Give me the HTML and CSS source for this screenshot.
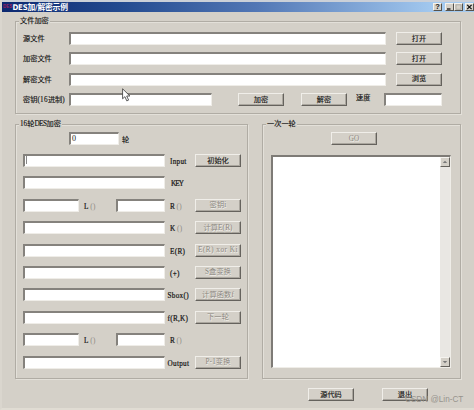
FILE: index.html
```html
<!DOCTYPE html>
<html lang="zh-CN">
<head>
<meta charset="utf-8">
<title>DES加/解密示例</title>
<link rel="stylesheet" href="styles.css">
</head>
<body>
<div class="window">
  <header class="titlebar">
    <span class="app-icon">DES</span>
    <h1>DES加/解密示例</h1>
    <div class="controls">
      <span class="ctl help">?</span>
      <span class="ctl"><svg viewBox="0 0 7 6"><path d="M1 5h3.5" stroke="#111" stroke-width="1.3"/></svg></span>
      <span class="ctl"><svg viewBox="0 0 7 6"><path d="M1 .8h5v4.5H1z" fill="none" stroke="#aaa79f" stroke-width=".8"/></svg></span>
      <span class="ctl close"><svg viewBox="0 0 7 6"><path d="M1.2.8l4.4 4.4M5.6.8L1.2 5.2" stroke="#111" stroke-width="1.2"/></svg></span>
    </div>
  </header>

  <section class="group files">
    <h2>文件加密</h2>
    <div class="file-row"><label>源文件</label><span class="field"></span><button>打开</button></div>
    <div class="file-row"><label>加密文件</label><span class="field"></span><button>打开</button></div>
    <div class="file-row"><label>解密文件</label><span class="field"></span><button>浏览</button></div>
    <div class="file-row key-row"><label>密钥<span class="lat">(16</span>进制<span class="lat">)</span></label><span class="field"></span><button>加密</button><button>解密</button><label>速度</label><span class="field"></span></div>
  </section>

  <main class="columns">
    <section class="group rounds">
      <h2><span>16</span>轮<span class="narrow">DES</span>加密</h2>
      <div class="count-row"><span class="field">0</span><label>轮</label></div>
      <div class="row"><span class="field caret"></span><label>Input</label><button>初始化</button></div>
      <div class="row"><span class="field"></span><label class="tight">KEY</label></div>
      <div class="row pair"><span class="field"></span><label>L<i>()</i></label><span class="field"></span><label>R<i>()</i></label><button disabled>密钥i</button></div>
      <div class="row"><span class="field"></span><label>K<i>()</i></label><button disabled>计算E(R)</button></div>
      <div class="row"><span class="field"></span><label>E(R)</label><button disabled class="wide">E(R) xor Ki</button></div>
      <div class="row"><span class="field"></span><label>(+)</label><button disabled>S盒变换</button></div>
      <div class="row"><span class="field"></span><label class="out">Sbox()</label><button disabled>计算函数f</button></div>
      <div class="row"><span class="field"></span><label class="out">f(R,K)</label><button disabled>下一轮</button></div>
      <div class="row pair"><span class="field"></span><label>L<i>()</i></label><span class="field"></span><label>R<i>()</i></label></div>
      <div class="row"><span class="field"></span><label class="out">Output</label><button disabled>P-1变换</button></div>
    </section>

    <section class="group single">
      <h2>一次一轮</h2>
      <button disabled class="go">GO</button>
      <div class="log">
        <div class="scrollbar">
          <span class="arrow"><svg viewBox="0 0 8 8"><path d="M1.8 5L4 2.8 6.2 5z" fill="#777"/></svg></span>
          <span class="arrow"><svg viewBox="0 0 8 8"><path d="M1.8 3L4 5.2 6.2 3z" fill="#777"/></svg></span>
        </div>
      </div>
    </section>
  </main>

  <footer class="actions"><button>源代码</button><button>退出</button></footer>
  <span class="watermark">CSDN @Lin-CT</span>
  <svg class="cursor" viewBox="0 0 9 14"><path d="M.6.8v10l2.3-2.1 1.9 4.2 1.8-.8-1.9-4.1h3.2z" fill="#fff" stroke="#333" stroke-width=".8"/></svg>
</div>
</body>
</html>
```
FILE: styles.css
```css
* { box-sizing: border-box; }

body {
  margin: 0;
  background: #d4d0c8;
  color: #151515;
  font: 7.2px/9px "Liberation Serif", "Noto Sans CJK SC", serif;
}

.window {
  position: relative;
  width: 474px;
  height: 410px;
  overflow: hidden;
  border-bottom: 2px solid #e0dcd3;
  border-left: 2px solid #dad6ce;
}

h1, h2 { margin: 0; font-size: inherit; font-weight: 400; }

.titlebar {
  display: flex;
  align-items: center;
  height: 12px;
  border-top: 2px solid #cbd0d8;
  background: linear-gradient(90deg, #0c2870, #234a8f 25%, #5277b5 54%, #a4caf0 92%);
}

.app-icon {
  width: 10.5px;
  padding-left: 1px;
  color: #a02060;
  font: bold 4.5px/8px "Liberation Sans", sans-serif;
}

h1 {
  color: #fff;
  font: bold 7.8px/9px "DejaVu Sans Condensed", "Noto Sans CJK SC", sans-serif;
  letter-spacing: -.22px;
}

.controls { display: flex; width: 41px; margin-left: auto; }

.ctl {
  width: 9px;
  height: 8px;
  background: #d4d0c8;
  border: solid;
  border-width: 1px;
  border-color: #f4f2ed #55534e #55534e #f4f2ed;
  color: #111;
  text-align: center;
  font: bold 7.5px/6px "Liberation Sans", sans-serif;
}
.ctl svg { display: block; width: 100%; height: 100%; }
.ctl.help { margin-right: 3px; }
.ctl.close { margin-left: 2px; }

.group {
  position: relative;
  border: 1px solid #b0aca4;
  box-shadow: 1px 1px #e3e0d9, inset 1px 1px #e3e0d9;
}

h2 {
  position: absolute;
  top: -5px;
  left: 3px;
  padding: 0 1px;
  background: #d4d0c8;
  white-space: nowrap;
}

label { white-space: nowrap; line-height: 14px; }
label, h2, button:enabled { -webkit-text-stroke: .15px #151515; }
.lat { letter-spacing: .3px; }
.rounds .row label { padding-top: 1px; -webkit-text-stroke: .2px #151515; letter-spacing: .3px; }
.rounds .row label i {
  margin-left: 1.5px;
  color: #8b8882;
  font-style: normal;
  -webkit-text-stroke: 0;
}
.rounds .row label.tight { letter-spacing: -.9px; margin-left: 1px; }
.rounds .row label.out { margin-left: -2.5px; letter-spacing: .3px; }
.narrow { letter-spacing: -.5px; }

.field {
  height: 13px;
  padding-left: 1px;
  background: #fff;
  border: solid;
  border-width: 2px 1px 1px 2px;
  border-color: #85827d #efede8 #efede8 #85827d;
}
.caret::before { content: ""; display: block; width: 1px; height: 8px; background: #888; }

button {
  width: 46px;
  height: 13px;
  padding: 0;
  background: #d4d0c8;
  border: solid;
  border-width: 1px;
  border-color: #f0eee9 #65625d #65625d #f0eee9;
  border-radius: 0;
  box-shadow: inset -1px -1px #aaa69e;
  color: #151515;
  font: inherit;
  line-height: 10px;
  white-space: nowrap;
}
button:disabled { color: #8a867f; text-shadow: .5px .5px #f3f1ec; letter-spacing: .15px; }
button.wide { letter-spacing: .5px; }

.files { height: 93px; margin: 9px 13px 0 13px; padding: 10px 0 0 7px; }

.file-row {
  display: grid;
  grid-template-columns: 46px 317px 45px;
  height: 20.4px;
}
.file-row button { margin-left: 10px; }
.key-row { grid-template-columns: 46px 143px 71px 64px 38px 57px; }
.key-row button:nth-of-type(1) { margin-left: 26px; }
.key-row button:nth-of-type(2) { margin-left: 18px; }
.key-row label:nth-of-type(2) { padding-left: 9px; line-height: 11px; }
.key-row > .field:last-child { margin-left: -1px; }

.columns { display: flex; gap: 14px; margin: 10px 13px 0; }
.rounds { width: 233px; height: 255px; padding: 7px 0 0 7px; }
.single { width: 199px; height: 255px; padding: 7px 0 0 8px; }

.count-row { display: flex; gap: 3px; height: 22px; padding-left: 46px; }
.count-row .field { width: 50px; font-size: 8px; line-height: 9px; }
.count-row label { padding-top: 1px; }

.row {
  display: grid;
  grid-template-columns: 142px 30px 46px;
  height: 22.4px;
}
.row label { padding-left: 5px; }
.row.pair { grid-template-columns: 56px 37px 49px 30px 46px; }

.go { display: block; margin-left: 60px; }

.log {
  width: 180px;
  height: 213px;
  margin-top: 10px;
  display: flex;
  justify-content: flex-end;
  background: #fff;
  border: solid;
  border-width: 2px 1px 1px 2px;
  border-color: #7e7b76 #efede8 #efede8 #7e7b76;
}
.scrollbar {
  display: flex;
  flex-direction: column;
  justify-content: space-between;
  width: 10px;
  background: #e9e7e3;
}
.arrow {
  width: 10px;
  height: 10px;
  background: #d4d0c8;
  border: solid;
  border-width: 1px;
  border-color: #f5f3ef #65625d #65625d #f5f3ef;
}
.arrow svg { display: block; }

.actions { display: flex; gap: 28px; margin: 9px 0 0 306px; }

.watermark {
  position: absolute;
  left: 403px;
  top: 395px;
  color: #97948e;
  font: 8.2px/10px "Liberation Sans", sans-serif;
  white-space: nowrap;
}

.cursor { position: absolute; left: 120px; top: 88px; width: 9px; height: 14px; }
```
